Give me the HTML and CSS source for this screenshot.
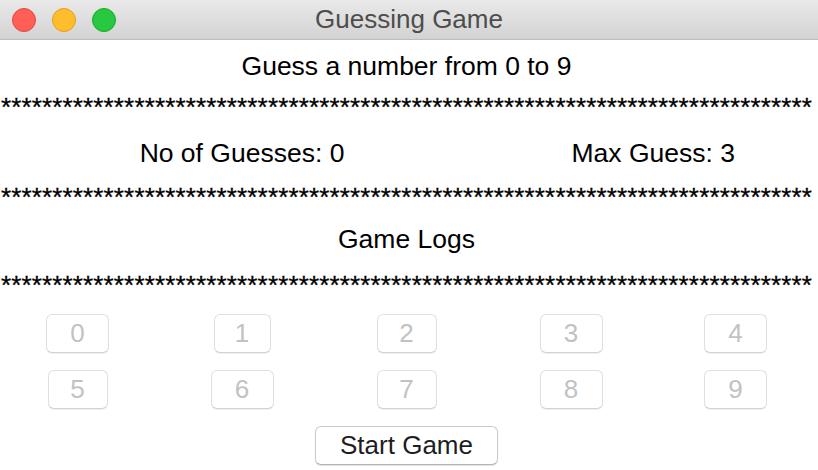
FILE: index.html
```html
<!DOCTYPE html>
<html>
<head>
<meta charset="utf-8">
<title>Guessing Game</title>
<link rel="stylesheet" href="styles.css">
</head>
<body>
<div class="window">
  <header class="titlebar">
    <div class="lights">
      <span class="light red"></span>
      <span class="light yellow"></span>
      <span class="light green"></span>
    </div>
    <div class="title">Guessing Game</div>
    <div class="spacer"></div>
  </header>
  <main class="content">
    <div class="line r1">Guess a number from 0 to 9</div>
    <div class="line stars r2">*******************************************************************************</div>
    <div class="cols r3">
      <div class="span3">No of Guesses: 0</div>
      <div class="span2">Max Guess: 3</div>
    </div>
    <div class="line stars r4">*******************************************************************************</div>
    <div class="line r5">Game Logs</div>
    <div class="line stars r6">*******************************************************************************</div>
    <div class="cols keys k1">
      <button class="key w63" disabled>0</button>
      <button class="key w57" disabled>1</button>
      <button class="key w60" disabled>2</button>
      <button class="key w63" disabled>3</button>
      <button class="key w63" disabled>4</button>
    </div>
    <div class="cols keys k2">
      <button class="key w60" disabled>5</button>
      <button class="key w63" disabled>6</button>
      <button class="key w60" disabled>7</button>
      <button class="key w63" disabled>8</button>
      <button class="key w63" disabled>9</button>
    </div>
    <div class="line start-row">
      <button class="start">Start Game</button>
    </div>
  </main>
</div>
</body>
</html>
```

FILE: styles.css
```css
html, body {
  margin: 0;
  padding: 0;
  background: #ffffff;
  overflow: hidden;
}

.window {
  width: 818px;
  height: 470px;
  overflow: hidden;
  font-family: "Liberation Sans", Arial, sans-serif;
  color: #000;
}

.titlebar {
  height: 39px;
  border-bottom: 1px solid #bdbdbd;
  background: linear-gradient(#e9e9e9, #d3d3d3);
  display: grid;
  grid-template-columns: 1fr auto 1fr;
  align-items: center;
}

.lights {
  display: flex;
  gap: 16px;
  padding-left: 12px;
}

.light {
  width: 22px;
  height: 22px;
  border-radius: 50%;
  border: 1px solid;
  box-sizing: content-box;
}

.red { background: #ff5f57; border-color: #e2463f; }
.yellow { background: #ffbd2e; border-color: #e1a116; }
.green { background: #28c940; border-color: #12ac28; }

.title {
  font-size: 26px;
  color: #4d4d4d;
  line-height: 30px;
  margin-top: -2px;
}

.content {
  width: 822.5px;
  margin-left: -4.75px;
}

.line {
  text-align: center;
  font-size: 26.5px;
  line-height: 30px;
  white-space: nowrap;
}

.stars {
  font-size: 26px;
  letter-spacing: 0.15px;
  margin-left: 4.75px;
  margin-right: 4.75px;
  -webkit-text-stroke: 0.3px #000;
}

.cols {
  display: grid;
  grid-template-columns: repeat(5, 1fr);
  font-size: 26.5px;
  line-height: 30px;
  text-align: center;
}

.span3 { grid-column: span 3; }
.span2 { grid-column: span 2; }

.r1 { margin-top: 11px; }
.r2 { margin-top: 11px; }
.r3 { margin-top: 16px; }
.r4 { margin-top: 14px; }
.r5 { margin-top: 12px; }
.r6 { margin-top: 16px; }

.keys { justify-items: center; }
.k1 { margin-top: 14px; }
.k2 { margin-top: 17px; }

.key {
  height: 39px;
  box-sizing: border-box;
  padding: 0;
  border: 1px solid #e0e0e0;
  border-bottom-color: #d2d2d2;
  border-radius: 6px;
  background: #ffffff;
  box-shadow: 0 1px 1px rgba(0, 0, 0, 0.06);
  font-family: "Liberation Sans", Arial, sans-serif;
  font-size: 26px;
  line-height: 37px;
  color: #c2c2c2;
}

.w57 { width: 57px; }
.w60 { width: 60px; }
.w63 { width: 63px; }

.start-row { margin-top: 17px; }

.start {
  width: 183px;
  height: 39px;
  box-sizing: border-box;
  padding: 0;
  border: 1px solid #cbcbcb;
  border-bottom-color: #b5b5b5;
  border-radius: 6px;
  background: #ffffff;
  box-shadow: 0 1px 1px rgba(0, 0, 0, 0.12);
  font-family: "Liberation Sans", Arial, sans-serif;
  font-size: 26px;
  line-height: 37px;
  color: #1e1e1e;
}
```
